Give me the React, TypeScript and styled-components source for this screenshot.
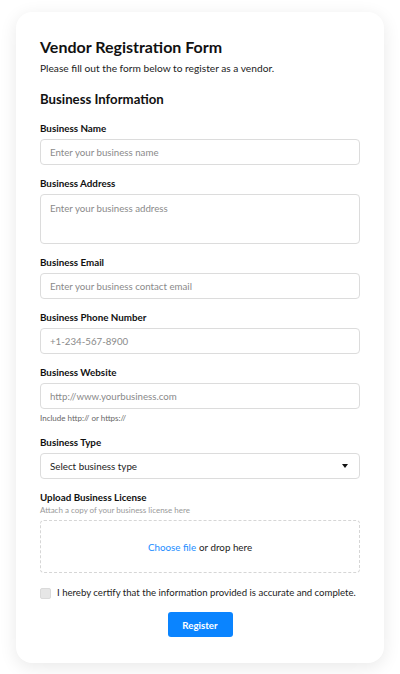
import React from 'react';
import styled, { createGlobalStyle } from 'styled-components';

const GlobalStyle = createGlobalStyle`
    html, body {
        margin: 0;
        padding: 0;
        background: #ffffff;
        font-family: Lato, "Noto Sans", sans-serif;
        color: #111;
    }
    * {
        box-sizing: border-box;
    }
`
const Page = styled.div`
    padding: 12px 16px;
`
const Card = styled.form`
    background: #fff;
    border-radius: 16px;
    box-shadow: 0 4px 18px rgba(0, 0, 0, 0.09);
    padding: 25px 24px 26px 24px;
    display: flex;
    flex-direction: column;
`
const Title = styled.h1`
    margin: 0;
    font-size: 16px;
    font-weight: 700;
    line-height: 20px;
    color: #111;
`
const Subtitle = styled.p`
    margin: 3px 0 0;
    font-size: 10.2px;
    line-height: 16px;
    color: #222;
`
const SectionTitle = styled.h2`
    margin: 13px 0 0;
    font-size: 13.2px;
    font-weight: 700;
    line-height: 20px;
    color: #111;
`
const Field = styled.div<{ $first?: boolean }>`
    display: flex;
    flex-direction: column;
    margin-top: ${p => (p.$first ? '12px' : '11px')};
`
const Label = styled.label`
    font-size: 9.8px;
    font-weight: 700;
    line-height: 14px;
    color: #111;
    margin-bottom: 4px;
`
const Hint = styled.span<{ $above?: boolean }>`
    font-size: 8px;
    line-height: 12px;
    color: ${p => (p.$above ? '#999' : '#666')};
    margin: ${p => (p.$above ? '-4px 0 4px' : '3px 0 0')};
`
const Input = styled.input`
    width: 100%;
    height: 26px;
    border: 1px solid #dcdcdc;
    border-radius: 4px;
    padding: 0 9px;
    font-family: inherit;
    font-size: 9.7px;
    color: #111;
    background: #fff;
    &::placeholder {
        color: #8a8a8a;
    }
`
const TextArea = styled.textarea`
    width: 100%;
    height: 50px;
    border: 1px solid #dcdcdc;
    border-radius: 4px;
    padding: 6px 9px;
    font-family: inherit;
    font-size: 9.7px;
    line-height: 14px;
    resize: none;
    &::placeholder {
        color: #8a8a8a;
    }
`
const SelectBox = styled.div`
    height: 26px;
    border: 1px solid #dcdcdc;
    border-radius: 4px;
    padding: 0 11px 0 9px;
    display: flex;
    align-items: center;
    justify-content: space-between;
    font-size: 9.8px;
    color: #222;
`
const Caret = styled.span`
    width: 0;
    height: 0;
    border-left: 3.5px solid transparent;
    border-right: 3.5px solid transparent;
    border-top: 4px solid #111;
`
const DropZone = styled.div`
    height: 53px;
    border: 1px dashed #d6d6d6;
    border-radius: 4px;
    display: flex;
    align-items: center;
    justify-content: center;
    font-size: 9.8px;
    color: #222;
`
const FileLink = styled.span`
    color: #1a8cff;
    margin-right: 3px;
`
const CheckRow = styled.label`
    display: flex;
    align-items: center;
    gap: 6px;
    margin-top: 13px;
    font-size: 9.6px;
    line-height: 14px;
    color: #222;
    white-space: nowrap;
`
const CheckBox = styled.span`
    width: 11px;
    height: 11px;
    border-radius: 2px;
    background: #e6e6e6;
    border: 1px solid #dadada;
    flex-shrink: 0;
`
const Button = styled.button`
    align-self: center;
    margin-top: 12px;
    width: 65px;
    height: 25px;
    border: none;
    border-radius: 3px;
    background: #0a84ff;
    color: #fff;
    font-family: inherit;
    font-size: 9.7px;
    font-weight: 700;
`

const App: React.FC = () => {
    return (
        <Page>
            <GlobalStyle />
            <Card onSubmit={e => e.preventDefault()}>
                <Title>Vendor Registration Form</Title>
                <Subtitle>Please fill out the form below to register as a vendor.</Subtitle>
                <SectionTitle>Business Information</SectionTitle>
                <Field $first>
                    <Label>Business Name</Label>
                    <Input placeholder="Enter your business name" />
                </Field>
                <Field>
                    <Label>Business Address</Label>
                    <TextArea placeholder="Enter your business address" />
                </Field>
                <Field>
                    <Label>Business Email</Label>
                    <Input placeholder="Enter your business contact email" />
                </Field>
                <Field>
                    <Label>Business Phone Number</Label>
                    <Input placeholder="+1-234-567-8900" />
                </Field>
                <Field>
                    <Label>Business Website</Label>
                    <Input placeholder="http://www.yourbusiness.com" />
                    <Hint>Include http:// or https://</Hint>
                </Field>
                <Field>
                    <Label>Business Type</Label>
                    <SelectBox>
                        <span>Select business type</span>
                        <Caret />
                    </SelectBox>
                </Field>
                <Field>
                    <Label>Upload Business License</Label>
                    <Hint $above>Attach a copy of your business license here</Hint>
                    <DropZone>
                        <FileLink>Choose file</FileLink> or drop here
                    </DropZone>
                </Field>
                <CheckRow>
                    <CheckBox />
                    I hereby certify that the information provided is accurate and complete.
                </CheckRow>
                <Button type="submit">Register</Button>
            </Card>
        </Page>
    )
}

export default App;
